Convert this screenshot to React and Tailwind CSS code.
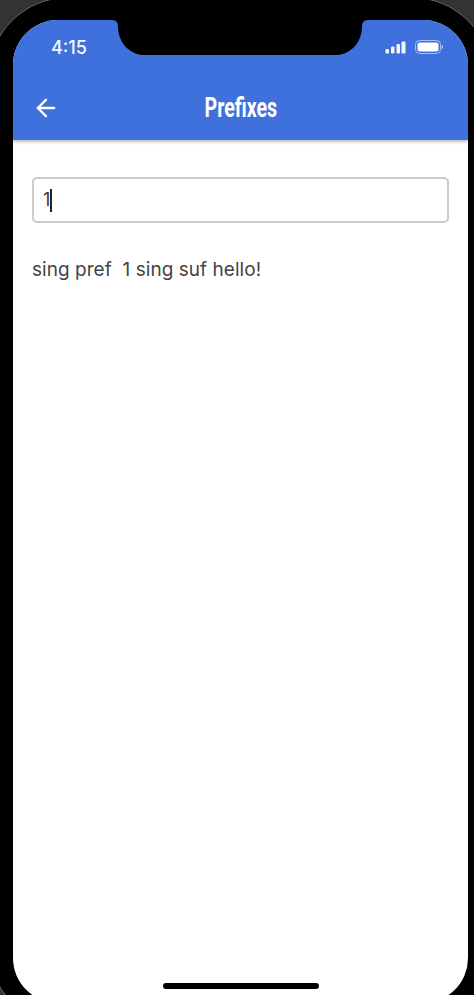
import { ArrowLeft } from "lucide-react";

const StatusIcons = () => (
  <div className="flex items-center gap-[9px]">
    <svg width="21" height="13" viewBox="0 0 21 13">
      <rect x="0.5" y="8" width="3.5" height="4.5" rx="1.2" fill="#f4f7fd" />
      <rect x="6" y="5.5" width="3.5" height="7" rx="1.2" fill="#f4f7fd" />
      <rect x="11.5" y="3" width="3.5" height="9.5" rx="1.2" fill="#f4f7fd" />
      <rect x="16.5" y="0.5" width="4" height="12" rx="1.2" fill="#f4f7fd" />
    </svg>
    <svg width="28" height="14" viewBox="0 0 28 14">
      <rect x="0.5" y="0.5" width="25" height="13" rx="4" fill="none" stroke="#a9bcec" strokeWidth="1" />
      <rect x="2.5" y="2.5" width="21" height="9" rx="2.5" fill="#ffffff" />
      <rect x="26.5" y="5" width="1.5" height="4" rx="0.7" fill="#a9bcec" />
    </svg>
  </div>
);

const App = () => {
  return (
    <div className="w-[474px] h-[995px] bg-[#333333] overflow-hidden relative font-['Inter',sans-serif]">
      {/* device body, bigger than the window */}
      <div className="-ml-[12px] -mt-[3px] w-[504px] h-[1029px] rounded-[80px] bg-black border border-[#666666] pl-[24px] pt-[22px]">
        <div className="w-[455px] h-[983px] bg-white rounded-[45px] overflow-hidden flex flex-col">
          <header className="h-[120px] bg-[#3f71dc] shadow-[0_1px_4px_rgba(0,0,0,0.4)] flex flex-col shrink-0">
            <div className="h-[54px] flex items-center justify-between pl-[38px] pr-[25px]">
              <span className="text-[18px] font-medium text-[#f4f7fd]">4:15</span>
              <StatusIcons />
            </div>
            <div className="flex-1 relative flex items-center justify-center pt-[2px]">
              <ArrowLeft className="absolute left-[19px] top-[20px] w-[28px] h-[28px] text-white" strokeWidth={2} />
              <h1 className="text-white text-[28px] leading-none font-bold scale-x-[0.7] font-['Roboto',sans-serif]">Prefixes</h1>
            </div>
          </header>

          <main className="flex-1 px-[19px] pt-[37px]">
            <div className="h-[46px] border-2 border-[#cccccc] rounded-[5px] flex items-center pl-[9px]">
              <span className="text-[18px] text-[#3a3a3a] leading-none">1</span>
              <span className="w-[1.5px] h-[23px] bg-[#222222]" />
            </div>
            <p className="mt-[35px] text-[19px] leading-[24px] tracking-[0.04px] text-[#444444] whitespace-pre">sing pref  1 sing suf hello!</p>
          </main>
        </div>
      </div>

      {/* notch */}
      <svg className="absolute left-[112px] top-0" width="256" height="56" viewBox="0 0 256 56">
        <path d="M0 20 Q6 20 6 26 C6 45 20 55 32 55 H224 C236 55 250 45 250 26 Q250 20 256 20 V0 H0 Z" fill="#000000" />
      </svg>
      {/* home indicator */}
      <div className="absolute left-[163px] top-[983px] w-[156px] h-[6px] rounded-full bg-black" />
    </div>
  );
};

export default App;
